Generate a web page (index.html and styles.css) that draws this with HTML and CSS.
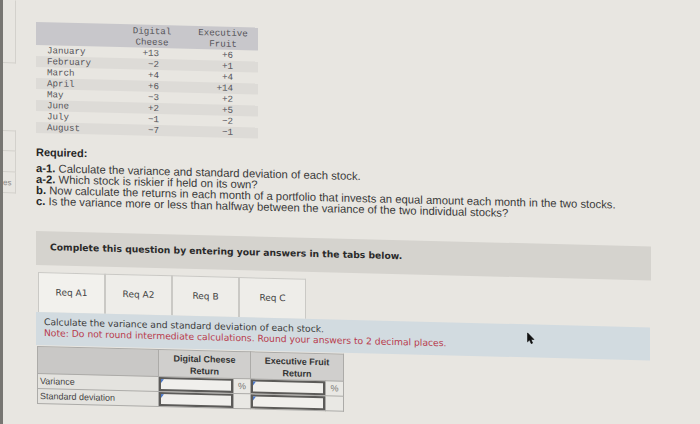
FILE: index.html
```html
<!DOCTYPE html>
<html>
<head>
<meta charset="utf-8">
<title>Variance question</title>
<link rel="stylesheet" href="styles.css">
</head>
<body>
<div class="page">
  <aside class="side">
    <div class="side-top"></div>
    <div class="side-box first"></div>
    <div class="side-box"></div>
    <div class="side-box"><span>es</span></div>
  </aside>
  <main class="main">
    <table class="data">
      <thead>
        <tr><th class="m"></th><th class="dc">Digital<br>Cheese</th><th class="ef">Executive<br>Fruit</th></tr>
      </thead>
      <tbody>
        <tr><td class="m">January</td><td class="dc">+13</td><td class="ef">+6</td></tr>
        <tr><td class="m">February</td><td class="dc">−2</td><td class="ef">+1</td></tr>
        <tr><td class="m">March</td><td class="dc">+4</td><td class="ef">+4</td></tr>
        <tr><td class="m">April</td><td class="dc">+6</td><td class="ef">+14</td></tr>
        <tr><td class="m">May</td><td class="dc">−3</td><td class="ef">+2</td></tr>
        <tr><td class="m">June</td><td class="dc">+2</td><td class="ef">+5</td></tr>
        <tr><td class="m">July</td><td class="dc">−1</td><td class="ef">−2</td></tr>
        <tr><td class="m">August</td><td class="dc">−7</td><td class="ef">−1</td></tr>
      </tbody>
    </table>

    <section class="req">
      <h2>Required:</h2>
      <p class="first"><b>a-1.</b> Calculate the variance and standard deviation of each stock.</p>
      <p><b>a-2.</b> Which stock is riskier if held on its own?</p>
      <p><b>b.</b> Now calculate the returns in each month of a portfolio that invests an equal amount each month in the two stocks.</p>
      <p><b>c.</b> Is the variance more or less than halfway between the variance of the two individual stocks?</p>
    </section>

    <div class="complete">Complete this question by entering your answers in the tabs below.</div>

    <div class="tabs">
      <div class="tab active">Req A1</div>
      <div class="tab">Req A2</div>
      <div class="tab">Req B</div>
      <div class="tab">Req C</div>
    </div>

    <div class="panel">
      <p>Calculate the variance and standard deviation of each stock.</p>
      <p class="note">Note: Do not round intermediate calculations. Round your answers to 2 decimal places.</p>
      <svg class="cursor" width="8" height="12" viewBox="0 0 8 12"><path d="M0.5 0.5 L0.5 9.5 L2.6 7.6 L4.2 11.2 L5.6 10.6 L4.1 7.1 L7 7 Z" fill="#111" stroke="#111" stroke-width="0.6" stroke-linejoin="round"/></svg>
    </div>

    <table class="ans">
      <thead>
        <tr>
          <th class="lbl"></th>
          <th colspan="2" class="h">Digital Cheese<br>Return</th>
          <th colspan="2" class="h">Executive Fruit<br>Return</th>
        </tr>
      </thead>
      <tbody>
        <tr class="r1">
          <td class="lbl">Variance</td>
          <td class="in"><div class="box"></div></td>
          <td class="pct">%</td>
          <td class="in"><div class="box"></div></td>
          <td class="pct">%</td>
        </tr>
        <tr class="r2">
          <td class="lbl">Standard deviation</td>
          <td class="in"><div class="box"></div></td>
          <td class="pct"></td>
          <td class="in"><div class="box"></div></td>
          <td class="pct"></td>
        </tr>
      </tbody>
    </table>
  </main>
</div>
</body>
</html>
```

FILE: styles.css
```css
* { box-sizing: border-box; }
html, body { margin: 0; padding: 0; }
body {
  width: 700px;
  height: 424px;
  overflow: hidden;
  background: #e8e6e1;
  font-family: "Liberation Sans", Arial, sans-serif;
  color: #333;
}
.page {
  display: flex;
  height: 424px;
  transform: skewY(1.45deg);
  transform-origin: 0 0;
}

/* left sidebar remnants */
.side {
  width: 16px;
  flex: none;
  border-left: 3px solid #777672;
  display: flex;
  flex-direction: column;
}
.side-top {
  height: 63px;
  border-right: 1px solid #d3d1cc;
  border-bottom: 1px solid #d3d1cc;
}
.side-box {
  height: 21px;
  border: 1px solid #d3d1cc;
  border-left: none;
  border-top: none;
  font-size: 8px;
  color: #8a8985;
  padding-top: 6px;
}
.side-box.first { margin-top: 67px; border-top: 1px solid #d3d1cc; }

.main {
  flex: 1;
  padding-left: 20px;
}

/* data table */
.data {
  border-collapse: collapse;
  width: 222px;
  margin-top: 21px;
  font-family: "Liberation Mono", "Courier New", monospace;
  font-size: 9.2px;
  line-height: 11px;
  color: #56555a;
}
.data th, .data td { padding: 0; font-weight: normal; }
.data thead th {
  background: #c8c7cb;
  padding-top: 1px;
  vertical-align: top;
}
.data .m { width: 84px; padding-left: 11px; text-align: left; }
.data .dc { width: 68px; }
.data .ef { width: 70px; }
.data thead .dc { text-align: center; padding-right: 4px; }
.data thead .ef { text-align: center; }
.data tbody .dc { text-align: right; padding-right: 29px; }
.data tbody .ef { text-align: right; padding-right: 25px; }
.data tbody tr:nth-child(even) { background: #dddbd7; }

/* required */
.req h2 {
  margin: 13px 0 0;
  font-size: 11px;
  line-height: 13px;
  font-weight: bold;
  color: #262626;
}
.req p {
  margin: 0;
  font-size: 11.3px;
  line-height: 11px;
  color: #3a3a3a;
}
.req p.first { margin-top: 4px; }
.req b { color: #262626; }

/* complete box */
.complete {
  width: 615px;
  height: 34px;
  margin-top: 24px;
  background: #d5d3ce;
  padding: 10px 0 0 14px;
  font-family: "DejaVu Sans", Verdana, sans-serif;
  font-weight: bold;
  font-size: 9.2px;
  line-height: 11px;
  color: #2a2a2a;
}

/* tabs */
.tabs {
  display: flex;
  margin: 7px 0 0 2px;
}
.tab {
  width: 67px;
  height: 40px;
  border: 1px solid #cac9c5;
  border-bottom: none;
  background: #eeede9;
  display: flex;
  align-items: center;
  justify-content: center;
  padding-bottom: 1px;
  font-family: "DejaVu Sans", Verdana, sans-serif;
  font-size: 9px;
  color: #444;
}
.tab.active { background: #f2f1ed; }

/* instruction panel */
.panel {
  position: relative;
  width: 614px;
  height: 33px;
  background: #d2dbe0;
  padding: 4px 8px 0;
  font-family: "DejaVu Sans", Verdana, sans-serif;
  font-size: 9.2px;
  line-height: 11px;
  color: #3a3a3a;
}
.panel p { margin: 0; }
.panel .note { color: #b83a4c; }
.cursor {
  position: absolute;
  left: 491px;
  top: 8px;
}

/* answer table */
.ans {
  border-collapse: collapse;
  margin: 1px 0 0 1px;
  font-size: 9px;
  color: #444;
}
.ans th, .ans td {
  border: 1px solid #acaba8;
  padding: 0;
}
.ans thead th {
  background: #d0cfcd;
  vertical-align: top;
  padding: 2px 0 0;
  font-weight: bold;
  line-height: 12px;
  color: #333;
}
.ans thead th.lbl { background: #c9c8c6; }
.ans .lbl { width: 121px; text-align: left; padding-left: 2px; background: #e4e3df; }
.ans .in { width: 75px; background: #e9e8e4; }
.ans .pct { width: 17px; text-align: center; color: #7a7976; background: #e9e8e4; }
.ans .pct:last-child { width: 18px; }
.ans tbody td { line-height: 13px; }
.box {
  position: relative;
  height: 14px;
  border: 2px solid #5c5b59;
  background: #f0efec;
}
.box::before {
  content: "";
  position: absolute;
  left: 0;
  top: 0;
  border-top: 4px solid #4b78c8;
  border-right: 3px solid transparent;
}
```
